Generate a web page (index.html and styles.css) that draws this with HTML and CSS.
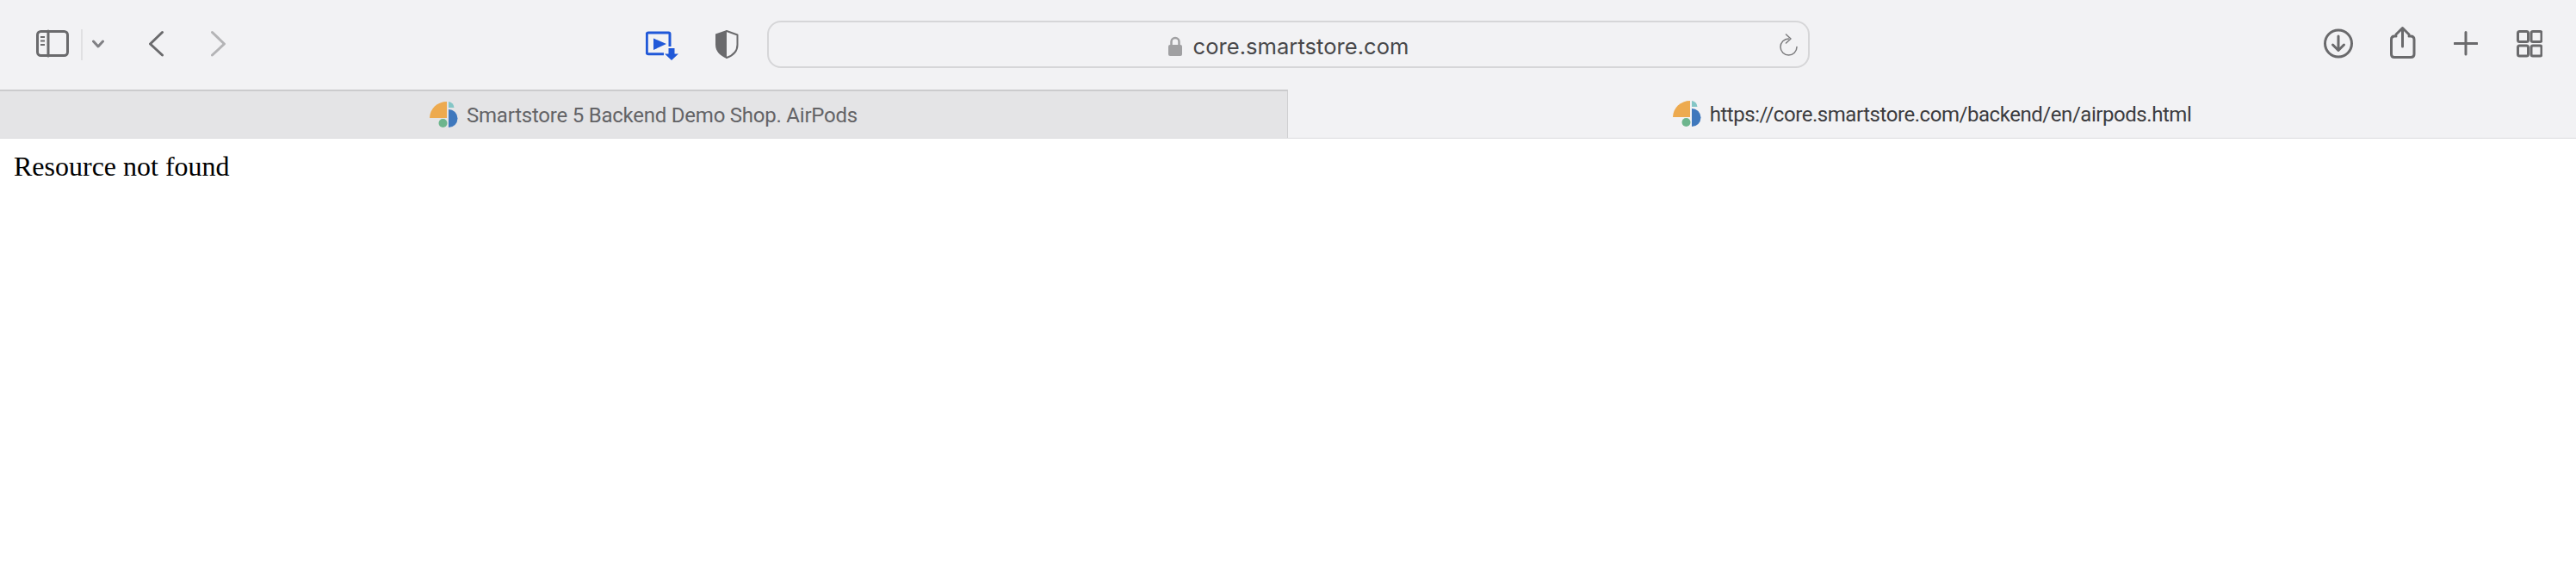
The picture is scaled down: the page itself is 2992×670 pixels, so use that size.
FILE: index.html
```html
<!DOCTYPE html>
<html lang="en">
<head>
    <meta charset="UTF-8">
    <title>Resource not found</title>
    <link rel="stylesheet" href="styles.css">
</head>
<body>
    <svg class="defs" width="0" height="0">
        <symbol id="favicon" viewBox="0 0 33 30">
            <path d="M20 0A20 19 0 0 0 0 19H20Z" fill="#edaa4f"/>
            <path d="M22 0V7H28.500A7.500 7.500 0 0 0 22 0Z" fill="#84c6c6"/>
            <path d="M22 9A10.500 10.500 0 0 1 22 30Z" fill="#3f78bd"/>
            <circle cx="15.500" cy="25" r="5" fill="#6db58d"/>
        </symbol>
    </svg>

    <div class="toolbar">
        <div class="left">
            <svg class="sidebar" width="38" height="104" viewBox="42 0 38 104">
                <rect x="43.500" y="36.500" width="35" height="28" rx="4"/>
                <path d="M56 36V65"/>
                <path class="thin" d="M47 43H52M47 47.500H52M47 52H52"/>
            </svg>
            <span class="sep"></span>
            <svg class="chevron" width="14" height="104" viewBox="107 0 14 104">
                <path d="M108.500 48L114 54L119.500 48"/>
            </svg>
            <svg class="back" width="18" height="104" viewBox="173 0 18 104">
                <path d="M188.500 37.500L174.500 51L188.500 64"/>
            </svg>
            <svg class="forward" width="18" height="104" viewBox="245 0 18 104">
                <path d="M246.500 37.500L260.500 51L246.500 64"/>
            </svg>
            <svg class="media" width="38" height="104" viewBox="750 0 38 104">
                <path class="line" d="M771 62.700H753Q751.300 62.700 751.300 61V39.500Q751.300 38 753 38H776.500Q778 38 778 39.500V54"/>
                <path d="M759 44.500L774 51L759 58Z"/>
                <path d="M776.500 56H783.500V62.500H788L780 70L772 62.500H776.500Z"/>
            </svg>
            <svg class="shield" width="28" height="104" viewBox="830 0 28 104">
                <path class="half" d="M844 35L831 39.500V52C831 60 837 65 844 68Z"/>
                <path class="edge" d="M844 36L856.500 40.500V52C856.500 59.500 851 64.500 844 67"/>
            </svg>
        </div>
        <div class="address">
            <svg class="lock" width="16" height="24" viewBox="0 0 16 24">
                <path class="shackle" d="M3.500 11V6.500A4.500 4.500 0 0 1 12.500 6.500V11"/>
                <rect y="10" width="16" height="13" rx="2"/>
            </svg>
            <span class="host">core.smartstore.com</span>
            <svg class="reload" width="22" height="27" viewBox="0 0 22 27">
                <path d="M10.500 6A9.500 9.500 0 1 0 20 15.500"/>
                <path d="M7.500 1L13 6L7.500 11"/>
            </svg>
        </div>
        <div class="right">
            <svg class="download" width="34" height="104" viewBox="2699 0 34 104">
                <circle cx="2716" cy="50.500" r="15.500"/>
                <path d="M2716 42V58M2709.500 52L2716 58.500L2722.500 52"/>
            </svg>
            <svg class="share" width="30" height="104" viewBox="2776 0 30 104">
                <path d="M2783 42H2781Q2777.500 42 2777.500 46V63Q2777.500 66.500 2781 66.500H2800Q2804 66.500 2804 63V46Q2804 42 2800 42H2798"/>
                <path d="M2790.500 33V54M2783 40L2790.500 32.500L2798 40"/>
            </svg>
            <svg class="plus" width="28" height="104" viewBox="2850 0 28 104">
                <path d="M2864 37.500V63M2851 50.500H2877"/>
            </svg>
            <svg class="grid" width="30" height="104" viewBox="2923 0 30 104">
                <rect x="2924.500" y="36.500" width="12" height="12" rx="2"/>
                <rect x="2940" y="36.500" width="12" height="12" rx="2"/>
                <rect x="2924.500" y="53" width="12" height="12" rx="2"/>
                <rect x="2940" y="53" width="12" height="12" rx="2"/>
            </svg>
        </div>
    </div>

    <div class="tabs">
        <div class="tab inactive">
            <svg class="fav" width="33" height="30"><use href="#favicon"/></svg>
            <span class="title">Smartstore 5 Backend Demo Shop. AirPods</span>
        </div>
        <div class="tab active">
            <svg class="fav" width="33" height="30"><use href="#favicon"/></svg>
            <span class="title">https://core.smartstore.com/backend/en/airpods.html</span>
        </div>
    </div>

    <div class="page">Resource not found</div>
</body>
</html>
```

FILE: styles.css
```css
*{
    margin: 0;
    padding: 0;
    box-sizing: border-box;
}
html, body{
    height: 100%;
    background: #fff;
}
body{
    overflow: hidden;
    font-family: 'Inter', 'Liberation Sans', sans-serif;
}
svg{
    display: block;
    flex: none;
}
.defs{
    position: absolute;
}

.toolbar{
    height: 104px;
    background: #f2f2f4;
    display: flex;
    align-items: flex-start;
    padding: 0 39px 0 42px;
}
.left, .right{
    display: flex;
}
.left{
    width: 849px;
}
.right{
    width: 254px;
    margin-left: auto;
}
.sep{
    width: 2px;
    height: 36px;
    margin: 34px 11px 0 14px;
    background: #e0e0e2;
}

.toolbar svg path, .toolbar svg circle, .toolbar svg rect{
    fill: none;
    stroke: #6a6a6c;
    stroke-width: 3;
    stroke-linecap: round;
    stroke-linejoin: round;
}
.toolbar .sidebar .thin{
    stroke-width: 2;
    stroke-linecap: butt;
}
.toolbar .chevron path{
    stroke: #808084;
}
.back{
    margin-left: 52px;
}
.forward{
    margin-left: 54px;
}
.toolbar .forward path{
    stroke: #b4b4b6;
}
.media{
    margin-left: 487px;
}
.toolbar .media path{
    fill: #2058d8;
    stroke: none;
}
.toolbar .media .line{
    fill: none;
    stroke: #2058d8;
    stroke-linecap: butt;
}
.shield{
    margin-left: 42px;
}
.toolbar .shield .half{
    fill: #6a6a6c;
    stroke: none;
}
.toolbar .shield .edge{
    stroke-width: 2;
}
.share{
    margin-left: 43px;
}
.plus{
    margin-left: 44px;
}
.grid{
    margin-left: 45px;
}

.address{
    width: 1211px;
    height: 55px;
    margin-top: 24px;
    padding-top: 5px;
    border: 2px solid #d6d6d8;
    border-radius: 16px;
    background: #f2f2f4;
    display: flex;
    justify-content: center;
    align-items: center;
    gap: 13px;
    position: relative;
}
.host{
    font-size: 25.600px;
    color: #48484a;
    line-height: 46px;
}
.toolbar .lock rect{
    fill: #a0a0a2;
    stroke: none;
}
.toolbar .lock .shackle{
    stroke: #a0a0a2;
    stroke-width: 2.5;
}
.reload{
    position: absolute;
    right: 11px;
    top: 13px;
}
.toolbar .reload path{
    stroke: #7c7c7e;
    stroke-width: 1.5;
}

.tabs{
    height: 57px;
    display: flex;
    background: #f2f2f4;
    border-bottom: 1px solid #dcdcde;
    font-family: 'Roboto', 'Liberation Sans', sans-serif;
    font-size: 24px;
}
.tab{
    display: flex;
    justify-content: center;
    align-items: center;
    gap: 10px;
    white-space: nowrap;
}
.tab .title{
    padding-top: 2px;
}
.tab.inactive{
    width: 1496px;
    background: #e4e4e6;
    color: #636366;
    letter-spacing: -0.23px;
    border-top: 2px solid #cbcbcd;
    border-right: 1px solid #cfcfd1;
}
.tab.active{
    flex: 1;
    color: #3c3c3f;
    letter-spacing: -0.45px;
}

.page{
    padding: 14px 16px 0;
    font-family: 'Liberation Serif', serif;
    font-size: 32px;
    line-height: 37px;
    color: #000;
}
```
